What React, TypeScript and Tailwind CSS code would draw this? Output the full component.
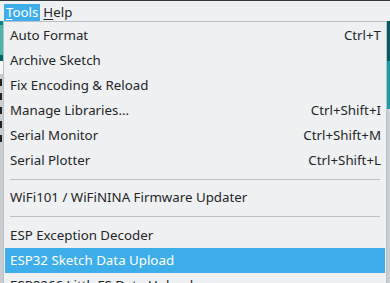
import React from "react";

const font = { fontFamily: '"Noto Sans", "DejaVu Sans", sans-serif' };

type Item = { label: React.ReactNode; shortcut?: string; active?: boolean } | "sep";

const items: Item[] = [
  { label: "Auto Format", shortcut: "Ctrl+T" },
  { label: "Archive Sketch" },
  { label: "Fix Encoding & Reload" },
  { label: "Manage Libraries...", shortcut: "Ctrl+Shift+I" },
  { label: "Serial Monitor", shortcut: "Ctrl+Shift+M" },
  { label: "Serial Plotter", shortcut: "Ctrl+Shift+L" },
  "sep",
  { label: "WiFi101 / WiFiNINA Firmware Updater" },
  "sep",
  { label: "ESP Exception Decoder" },
  { label: "ESP32 Sketch Data Upload", active: true },
  { label: "ESP8266 LittleFS Data Upload" },
];

export default function App() {
  return (
    <div
      className="relative w-[390px] h-[283px] overflow-hidden bg-[#eff0f1] text-[#232629] flex flex-col"
      style={font}
    >
      <div className="h-[1px] bg-[#31363b] shrink-0" />
      <div className="h-[20px] shrink-0 flex items-end pl-[4px] text-[13.3px] leading-none">
        <div className="h-[17px] px-[2px] bg-[#3daee9] text-white flex items-center">
          <span>
            <span className="underline underline-offset-2">T</span>ools
          </span>
        </div>
        <div className="h-[17px] px-[3px] flex items-center">
          <span>
            <span className="underline underline-offset-2">H</span>elp
          </span>
        </div>
      </div>
      {/* background IDE */}
      <div className="flex-1 flex">
        <div className="w-[3px] flex flex-col">
          <div className="h-[4px] bg-[#00878a]" />
          <div className="h-[30px] bg-[#4db6ac]" />
          <div className="h-[6px] bg-[#006468]" />
          <div className="h-[13px] bg-[#f6f8f8]" />
          <div className="flex-1 bg-[#c8cdd2] flex flex-col pt-[5px] gap-[7px]">
            <div className="h-[7px] w-[2px] bg-[#222]" />
            <div className="h-[7px] w-[2px] bg-[#222]" />
            <div className="h-[7px] w-[2px] bg-[#222]" />
            <div className="h-[7px] w-[2px] bg-[#222]" />
            <div className="h-[7px] w-[2px] bg-[#222]" />
          </div>
        </div>
        <div className="flex-1" />
        <div className="w-[3px] flex flex-col">
          <div className="h-[40px] bg-[#005c5f]" />
          <div className="h-[48px] bg-[#17a1a5]" />
          <div className="flex-1 bg-[#c8cdd2]" />
        </div>
      </div>
      {/* menu popup */}
      <div className="absolute left-[3px] top-[21px] w-[384px] h-[300px] bg-[#eff0f1] border border-[#bcc0c5] pt-[1px] px-[1px] text-[13.3px]">
        {items.map((it, i) =>
          it === "sep" ? (
            <div key={i} className="h-[12.5px] flex items-center px-[5px]">
              <div className="h-[1px] w-full bg-[#bdc1c5]" />
            </div>
          ) : (
            <div
              key={i}
              className={
                "h-[25px] flex items-center justify-between pl-[5px] pr-[4px] " +
                (it.active ? "bg-[#3daee9] text-white" : "")
              }
            >
              <span>{it.label}</span>
              {it.shortcut && <span>{it.shortcut}</span>}
            </div>
          )
        )}
      </div>
    </div>
  );
}
